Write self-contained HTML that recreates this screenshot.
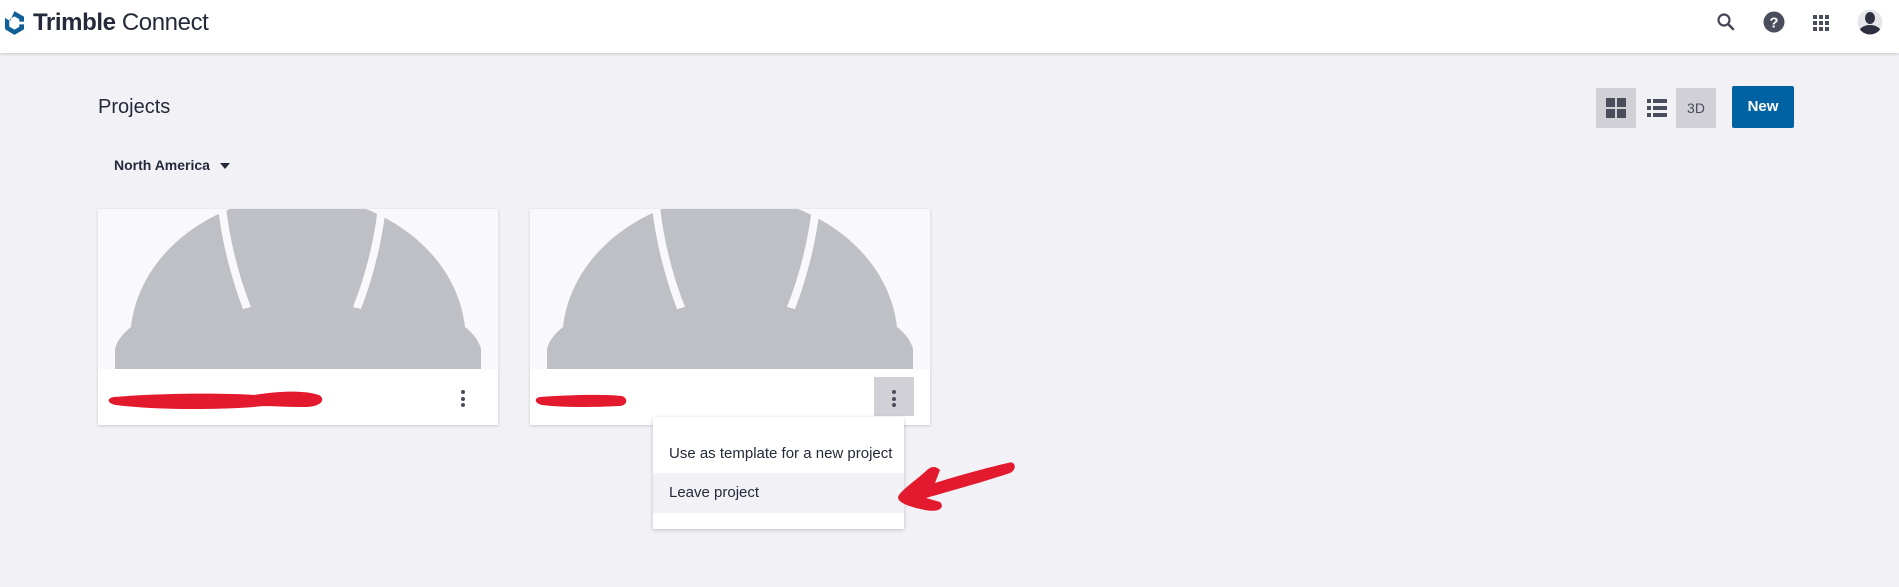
<!DOCTYPE html>
<html><head><meta charset="utf-8"><style>
*{margin:0;padding:0;box-sizing:border-box}
body{width:1899px;height:587px;background:#f1f1f6;font-family:"Liberation Sans",sans-serif;position:relative;overflow:hidden;color:#252a3a}
.hdr{position:absolute;left:0;top:0;width:1899px;height:53px;background:#fff;box-shadow:0 1px 3px rgba(0,0,0,.18)}
.abs{position:absolute}
.card{position:absolute;top:209px;width:400px;height:216px;background:#fff;box-shadow:0 1px 3px rgba(0,0,0,.15)}
.img{position:absolute;left:0;top:0;width:400px;height:160px;background:#f9f9fb;overflow:hidden}
.dots{position:absolute;width:4px}
.dots i{display:block;width:4px;height:4px;border-radius:50%;background:#4a4d5c;margin-bottom:2.5px}
</style></head><body>
<div class="hdr">
<svg class="abs" style="left:4px;top:10px" width="21" height="26" viewBox="0 0 22 25"><path d="M11 0 L21 6 L21 11 L16 11 L16 8.5 L11 5.5 L6 8.5 L6 11 Z M1 7 L1 18 L5.5 20.5 L5.5 10 Z" fill="#0e5f96"/><path d="M21 14 L21 19 L11 25 L1 19 L5 16 L11 19.5 L16 16.5 L16 14 Z" fill="#0e5f96"/></svg>
<div class="abs" style="left:33px;top:9px;font-size:24px;letter-spacing:-0.4px;color:#252a3a"><span style="font-weight:bold">Trimble</span> <span>Connect</span></div>
<svg class="abs" style="left:1716px;top:12px" width="20" height="20" viewBox="0 0 20 20"><circle cx="8" cy="8" r="5.5" fill="none" stroke="#444857" stroke-width="2.2"/><path d="M12 12 L17 17" stroke="#444857" stroke-width="2.6" stroke-linecap="round"/></svg>
<svg class="abs" style="left:1763px;top:11px" width="22" height="22" viewBox="0 0 22 22"><circle cx="11" cy="11" r="10.5" fill="#4a4d5c"/><text x="11" y="16.5" text-anchor="middle" font-family="Liberation Sans" font-weight="bold" font-size="15" fill="#fff">?</text></svg>
<svg class="abs" style="left:1813px;top:15px" width="16" height="16" viewBox="0 0 16 16" fill="#4a4d5c"><rect x="0" y="0" width="4" height="4"/><rect x="6" y="0" width="4" height="4"/><rect x="12" y="0" width="4" height="4"/><rect x="0" y="6" width="4" height="4"/><rect x="6" y="6" width="4" height="4"/><rect x="12" y="6" width="4" height="4"/><rect x="0" y="12" width="4" height="4"/><rect x="6" y="12" width="4" height="4"/><rect x="12" y="12" width="4" height="4"/></svg>
<svg class="abs" style="left:1857px;top:9px" width="26" height="26" viewBox="0 0 26 26"><circle cx="13" cy="13" r="12.5" fill="#e6e6ea"/><clipPath id="c"><circle cx="13" cy="13" r="12.5"/></clipPath><g clip-path="url(#c)" fill="#2d3040"><ellipse cx="13" cy="9" rx="5" ry="6"/><ellipse cx="13" cy="25" rx="12" ry="9"/></g></svg>
</div>
<div class="abs" style="left:98px;top:96px;font-size:20px;color:#252a3a">Projects</div>
<div class="abs" style="left:114px;top:157px;font-size:14px;font-weight:bold;color:#252a3a">North America</div>
<svg class="abs" style="left:220px;top:163px" width="10" height="6"><path d="M0 0 L10 0 L5 6Z" fill="#252a3a"/></svg>
<div class="abs" style="left:1596px;top:88px;width:40px;height:40px;background:#d0d0d6"></div>
<svg class="abs" style="left:1606px;top:98px" width="20" height="20" fill="#4a4d5c"><rect x="0" y="0" width="9" height="9"/><rect x="11" y="0" width="9" height="9"/><rect x="0" y="11" width="9" height="9"/><rect x="11" y="11" width="9" height="9"/></svg>
<svg class="abs" style="left:1647px;top:99px" width="20" height="18" fill="#4a4d5c"><rect x="0" y="0" width="4" height="4"/><rect x="6" y="0" width="14" height="4"/><rect x="0" y="7" width="4" height="4"/><rect x="6" y="7" width="14" height="4"/><rect x="0" y="14" width="4" height="4"/><rect x="6" y="14" width="14" height="4"/></svg>
<div class="abs" style="left:1676px;top:88px;width:40px;height:40px;background:#d0d0d6;font-size:14px;color:#4a4d5c;text-align:center;line-height:40px">3D</div>
<div class="abs" style="left:1732px;top:86px;width:62px;height:42px;background:#0062a3;border-radius:2px;color:#fff;font-weight:bold;font-size:15px;text-align:center;line-height:42px">New</div>

<div class="card" style="left:98px">
<div class="img"><svg width="400" height="160" viewBox="0 0 400 160"><path d="M17 160 L17 140 Q20 128 33 118 C42 40 120 -12 200 -14 C280 -12 358 40 367 118 Q380 128 383 140 L383 160 Z" fill="#bfc0c5"/><path d="M120 -2 L128 -2 Q134 50 153 98 L145 100 Q126 50 120 -2Z M288 -2 L280 -2 Q274 50 255 98 L263 100 Q282 50 288 -2Z" fill="#f9f9fb"/></svg></div>
<svg class="abs" style="left:6px;top:176px" width="225" height="26"><path d="M10 12 C60 8 120 8 150 10 C175 6 200 5 215 10 C222 14 218 22 200 22 C175 22 160 20 150 22 C110 25 50 25 12 20 C2 18 3 13 10 12Z" fill="#e31a2d"/></svg>
<div class="dots" style="left:363px;top:181px"><i></i><i></i><i></i></div>
</div>

<div class="card" style="left:530px">
<div class="img"><svg width="400" height="160" viewBox="0 0 400 160"><path d="M17 160 L17 140 Q20 128 33 118 C42 40 120 -12 200 -14 C280 -12 358 40 367 118 Q380 128 383 140 L383 160 Z" fill="#bfc0c5"/><path d="M122 -2 L130 -2 Q136 50 155 98 L147 100 Q128 50 122 -2Z M290 -2 L282 -2 Q276 50 257 98 L265 100 Q284 50 290 -2Z" fill="#f9f9fb"/></svg></div>
<svg class="abs" style="left:2px;top:176px" width="100" height="26"><path d="M8 12 C35 10 70 9 90 11 C96 13 96 20 88 21 C65 22 35 23 10 20 C2 18 2 13 8 12Z" fill="#e31a2d"/></svg>
<div class="abs" style="left:344px;top:168px;width:40px;height:39px;background:#d0d0d6"></div>
<div class="dots" style="left:362px;top:181px"><i></i><i></i><i></i></div>
</div>

<div class="abs" style="left:653px;top:417px;width:251px;height:112px;background:#fff;box-shadow:0 1px 4px rgba(0,0,0,.2)">
<div class="abs" style="left:16px;top:28px;font-size:15px;color:#252a3a">Use as template for a new project</div>
<div class="abs" style="left:0;top:56px;width:251px;height:40px;background:#f1f1f6"></div>
<div class="abs" style="left:16px;top:67px;font-size:15px;color:#252a3a">Leave project</div>
</div>
<svg class="abs" style="left:890px;top:455px" width="125" height="60"><path d="M118 8 C100 12 70 20 45 28 L50 15 C45 10 40 12 36 16 C25 26 10 36 8 42 C8 48 20 52 35 55 C50 58 55 52 50 47 L36 43 C60 36 90 28 120 18 C128 14 125 5 118 8Z" fill="#e31a2d"/></svg>
</body></html>
